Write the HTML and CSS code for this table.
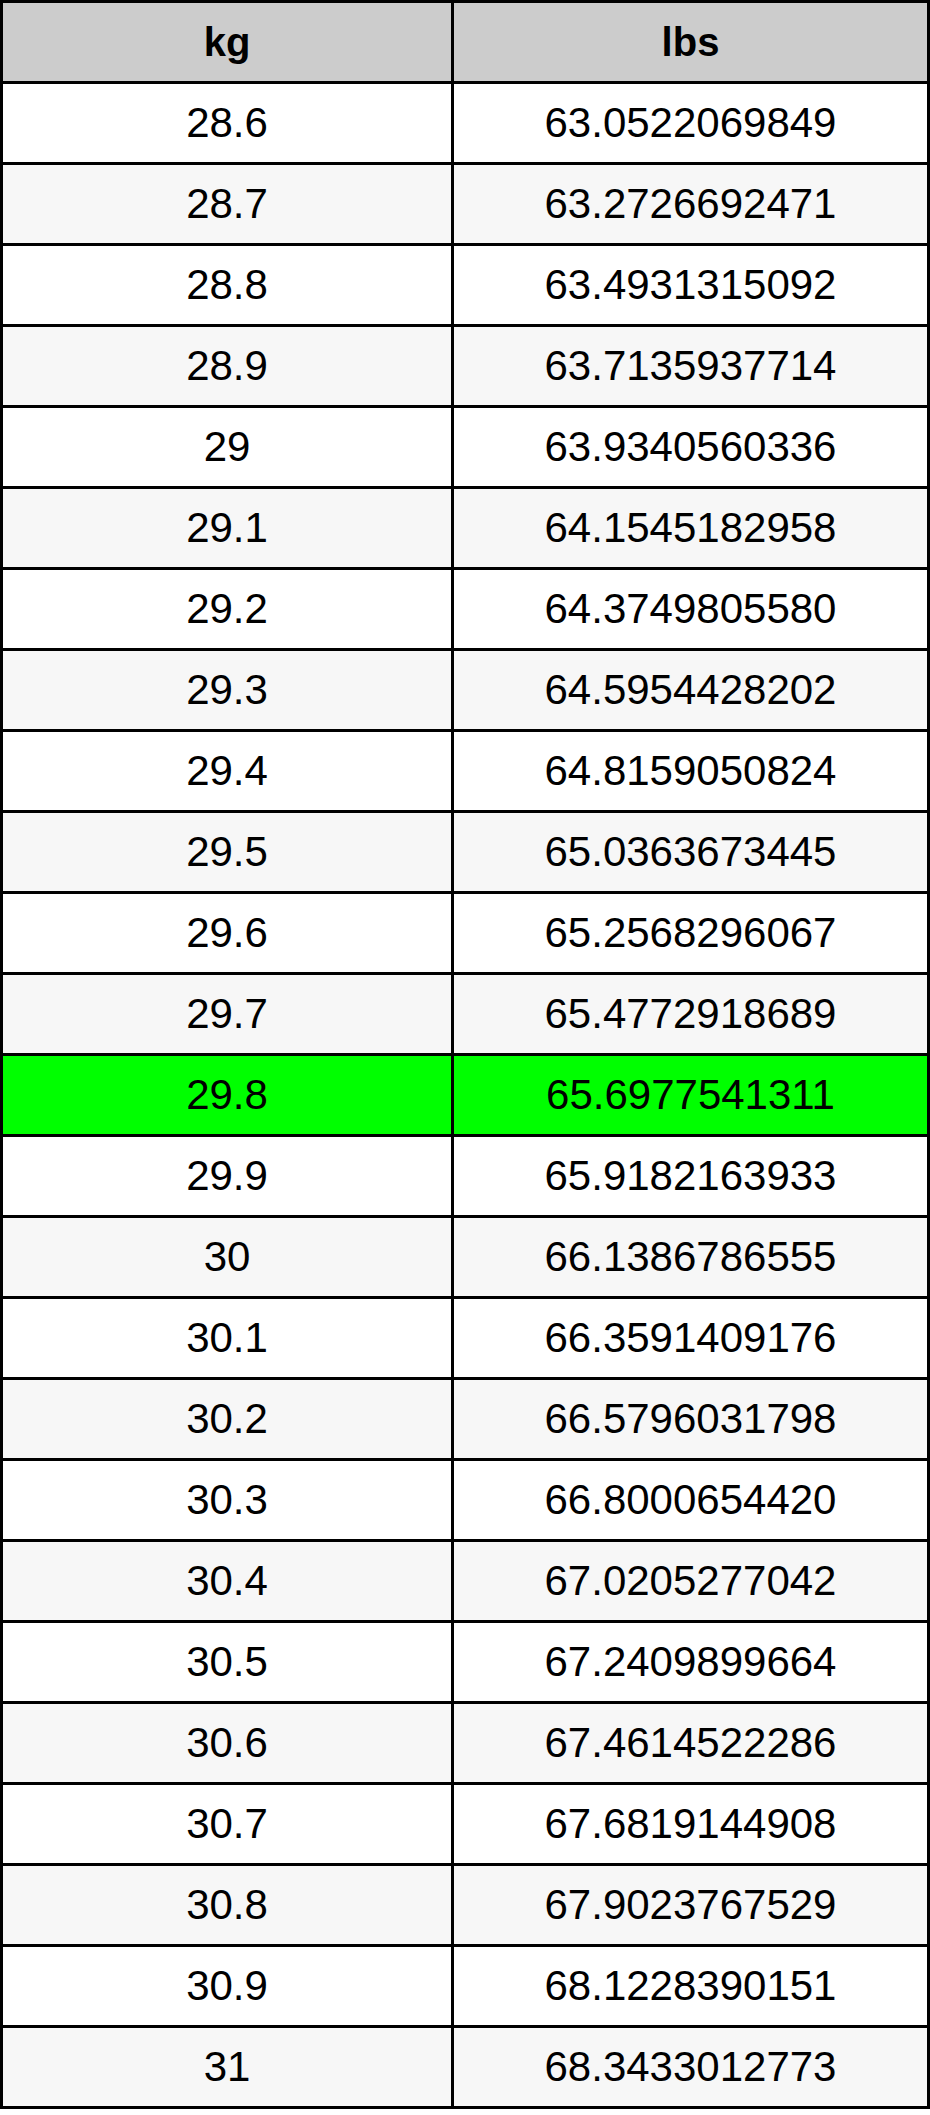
FILE: index.html
```html
<!DOCTYPE html>
<html>
<head>
<meta charset="utf-8">
<link rel="stylesheet" href="styles.css">
</head>
<body>
<table class="conv">
<thead>
<tr><th class="c1">kg</th><th class="c2">lbs</th></tr>
</thead>
<tbody>
<tr><td>28.6</td><td>63.0522069849</td></tr>
<tr class="alt"><td>28.7</td><td>63.2726692471</td></tr>
<tr><td>28.8</td><td>63.4931315092</td></tr>
<tr class="alt"><td>28.9</td><td>63.7135937714</td></tr>
<tr><td>29</td><td>63.9340560336</td></tr>
<tr class="alt"><td>29.1</td><td>64.1545182958</td></tr>
<tr><td>29.2</td><td>64.3749805580</td></tr>
<tr class="alt"><td>29.3</td><td>64.5954428202</td></tr>
<tr><td>29.4</td><td>64.8159050824</td></tr>
<tr class="alt"><td>29.5</td><td>65.0363673445</td></tr>
<tr><td>29.6</td><td>65.2568296067</td></tr>
<tr class="alt"><td>29.7</td><td>65.4772918689</td></tr>
<tr class="hl"><td>29.8</td><td>65.6977541311</td></tr>
<tr><td>29.9</td><td>65.9182163933</td></tr>
<tr class="alt"><td>30</td><td>66.1386786555</td></tr>
<tr><td>30.1</td><td>66.3591409176</td></tr>
<tr class="alt"><td>30.2</td><td>66.5796031798</td></tr>
<tr><td>30.3</td><td>66.8000654420</td></tr>
<tr class="alt"><td>30.4</td><td>67.0205277042</td></tr>
<tr><td>30.5</td><td>67.2409899664</td></tr>
<tr class="alt"><td>30.6</td><td>67.4614522286</td></tr>
<tr><td>30.7</td><td>67.6819144908</td></tr>
<tr class="alt"><td>30.8</td><td>67.9023767529</td></tr>
<tr><td>30.9</td><td>68.1228390151</td></tr>
<tr class="alt"><td>31</td><td>68.3433012773</td></tr>
</tbody>
</table>
</body>
</html>
```

FILE: styles.css
```css
html, body {
  margin: 0;
  padding: 0;
  background: #ffffff;
}

.conv {
  border-collapse: separate;
  border-spacing: 0;
  table-layout: fixed;
  width: 930px;
  border-top: 3px solid #000;
  border-left: 3px solid #000;
  font-family: "Liberation Sans", Arial, sans-serif;
  font-size: 42px;
  color: #000;
}

.conv th,
.conv td {
  height: 78px;
  padding: 0;
  text-align: center;
  vertical-align: middle;
  border-right: 3px solid #000;
  border-bottom: 3px solid #000;
  box-sizing: content-box;
  background: #ffffff;
}

.conv th {
  background: #cccccc;
  font-weight: bold;
  font-size: 40px;
}

.conv .c1 {
  width: 448px;
}

.conv .c2 {
  width: 473px;
}

.conv tr.alt td {
  background: #f7f7f7;
}

.conv tr.hl td {
  background: #00ff00;
}
```
